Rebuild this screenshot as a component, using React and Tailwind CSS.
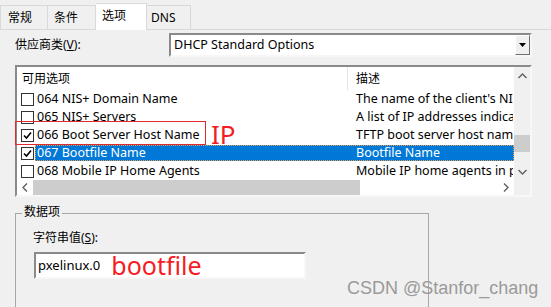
import React from "react";

const rows = [
  { checked: false, name: "064 NIS+ Domain Name", desc: "The name of the client's NIS+ domain" },
  { checked: false, name: "065 NIS+ Servers", desc: "A list of IP addresses indicating NIS+ servers" },
  { checked: true, name: "066 Boot Server Host Name", desc: "TFTP boot server host name" },
  { checked: true, name: "067 Bootfile Name", desc: "Bootfile Name", selected: true },
  { checked: false, name: "068 Mobile IP Home Agents", desc: "Mobile IP home agents in priority order" },
];

function Check({ checked }) {
  return (
    <div className="flex h-[13px] w-[13px] items-center justify-center border border-[#333] bg-white">
      {checked && (
        <svg width="9" height="9" viewBox="0 0 9 9">
          <path d="M1 4.5 L3.5 7 L8 1.5" fill="none" stroke="#000" strokeWidth="1.6" />
        </svg>
      )}
    </div>
  );
}

export default function App() {
  return (
    <div className="relative h-[307px] w-[551px] overflow-hidden bg-[#f0f0f0] font-['Noto_Sans','Noto_Sans_CJK_SC',sans-serif] text-[12px] leading-none text-black">
      {/* tabs */}
      <div className="flex h-[30px] items-end border-b border-[#d9d9d9]">
        <div className="flex h-[24px] w-[48px] items-center border border-b-0 border-[#d9d9d9] pl-[7px]">常规</div>
        <div className="flex h-[24px] w-[48px] items-center border border-b-0 border-l-0 border-[#d9d9d9] pl-[6px]">条件</div>
        <div className="-mb-px flex h-[27px] w-[51px] items-center border border-b-0 border-l-0 border-[#d9d9d9] bg-white pb-[2px] pl-[6px]">选项</div>
        <div className="flex h-[24px] w-[44px] items-center border border-b-0 border-l-0 border-[#d9d9d9] pl-[4px] font-['Noto_Sans',sans-serif]">DNS</div>
      </div>

      {/* vendor class row */}
      <div className="mt-[3px] flex h-[24px] items-center">
        <div className="w-[169px] pl-[15px]">
          供应商类(<span className="underline">V</span>):
        </div>
        <div className="flex h-[24px] w-[363px] border-2 border-b-[#f7f7f7] border-l-[#8a8a8a] border-r-[#f7f7f7] border-t-[#8a8a8a] bg-white">
          <div className="flex flex-1 items-center pl-[3px] text-[12.5px]">DHCP Standard Options</div>
          <div className="flex h-[20px] w-[15px] items-center justify-center border border-b-[#707070] border-l-[#fff] border-r-[#707070] border-t-[#fff] bg-[#f0f0f0]">
            <svg width="7" height="4" viewBox="0 0 7 4">
              <path d="M0 0 H7 L3.5 4 Z" fill="#000" />
            </svg>
          </div>
        </div>
      </div>

      {/* list view */}
      <div className="ml-[15px] mt-[8px] flex h-[132px] w-[517px] border-2 border-b-[#f7f7f7] border-l-[#8a8a8a] border-r-[#f7f7f7] border-t-[#8a8a8a] bg-white">
        <div className="flex w-[497px] flex-col">
          <div className="flex h-[23px] items-center">
            <div className="flex h-full w-[331px] items-center border-r border-[#e5e5e5] pl-[5px]">可用选项</div>
            <div className="pl-[8px]">描述</div>
          </div>
          <div className="flex flex-col">
            {rows.map((r) => (
              <div key={r.name} className="flex h-[18px] items-center whitespace-nowrap text-[12.5px]">
                <div className="flex w-[18px] justify-end pr-[1px]">
                  <Check checked={r.checked} />
                </div>
                <div
                  className={
                    r.selected
                      ? "flex h-[16px] flex-1 items-center overflow-hidden border border-dotted border-[#e8a050] bg-[#0078d7] text-white"
                      : "flex h-[16px] flex-1 items-center overflow-hidden border border-transparent"
                  }
                >
                  <div className="w-[312px] pl-[1px]">{r.name}</div>
                  <div className="flex-1 overflow-hidden pl-[8px]">{r.desc}</div>
                </div>
              </div>
            ))}
          </div>
          <div className="flex h-[15px] items-center">
            <div className="flex w-[16px] items-center justify-center">
              <svg width="6" height="9" viewBox="0 0 6 9">
                <path d="M5 0.5 L1 4.5 L5 8.5" fill="none" stroke="#606060" strokeWidth="1.4" />
              </svg>
            </div>
            <div className="h-full w-[327px] bg-[#cdcdcd]" />
            <div className="flex-1" />
            <div className="flex w-[16px] items-center justify-center">
              <svg width="6" height="9" viewBox="0 0 6 9">
                <path d="M1 0.5 L5 4.5 L1 8.5" fill="none" stroke="#606060" strokeWidth="1.4" />
              </svg>
            </div>
          </div>
        </div>
        <div className="flex w-[16px] flex-col bg-[#f0f0f0]">
          <div className="flex h-[17px] items-center justify-center">
            <svg width="9" height="6" viewBox="0 0 9 6">
              <path d="M0.5 5 L4.5 1 L8.5 5" fill="none" stroke="#606060" strokeWidth="1.4" />
            </svg>
          </div>
          <div className="mt-[51px] h-[17px] w-[16px] bg-[#cdcdcd]" />
          <div className="flex-1" />
          <div className="flex h-[17px] items-center justify-center">
            <svg width="9" height="6" viewBox="0 0 9 6">
              <path d="M0.5 1 L4.5 5 L8.5 1" fill="none" stroke="#606060" strokeWidth="1.4" />
            </svg>
          </div>
          <div className="h-[15px] bg-[#f0f0f0]" />
        </div>
      </div>

      {/* group box */}
      <div className="relative ml-[15px] mt-[16px] h-[120px] w-[414px] border border-[#a8a8a8]">
        <div className="absolute left-[6px] top-[-8px] bg-[#f0f0f0] px-[2px]">数据项</div>
        <div className="ml-[17px] mt-[18px]">
          字符串值(<span className="underline">S</span>):
        </div>
        <div className="ml-[18px] mt-[8px] flex h-[27px] w-[272px] items-center border-2 border-b-[#f7f7f7] border-l-[#8a8a8a] border-r-[#f7f7f7] border-t-[#8a8a8a] bg-white pl-[2px]">
          <span className="text-[13px]">pxelinux.0</span>
          <span className="ml-[11px] font-['Noto_Sans',sans-serif] text-[25px] text-[#f51d23]">bootfile</span>
        </div>
      </div>

      {/* annotations */}
      <div className="absolute left-[15px] top-[121px] h-[24px] w-[191px] border border-[#e02a2f]" />
      <div className="absolute left-[211px] top-[119px] font-['Noto_Sans',sans-serif] text-[26px] leading-[30px] text-[#f51d23]">IP</div>
      <div className="absolute left-[347px] top-[277px] font-['Liberation_Sans',sans-serif] text-[18px] leading-[22px] text-[#9a9a9a]">
        CSDN @Stanfor_chang
      </div>
    </div>
  );
}
